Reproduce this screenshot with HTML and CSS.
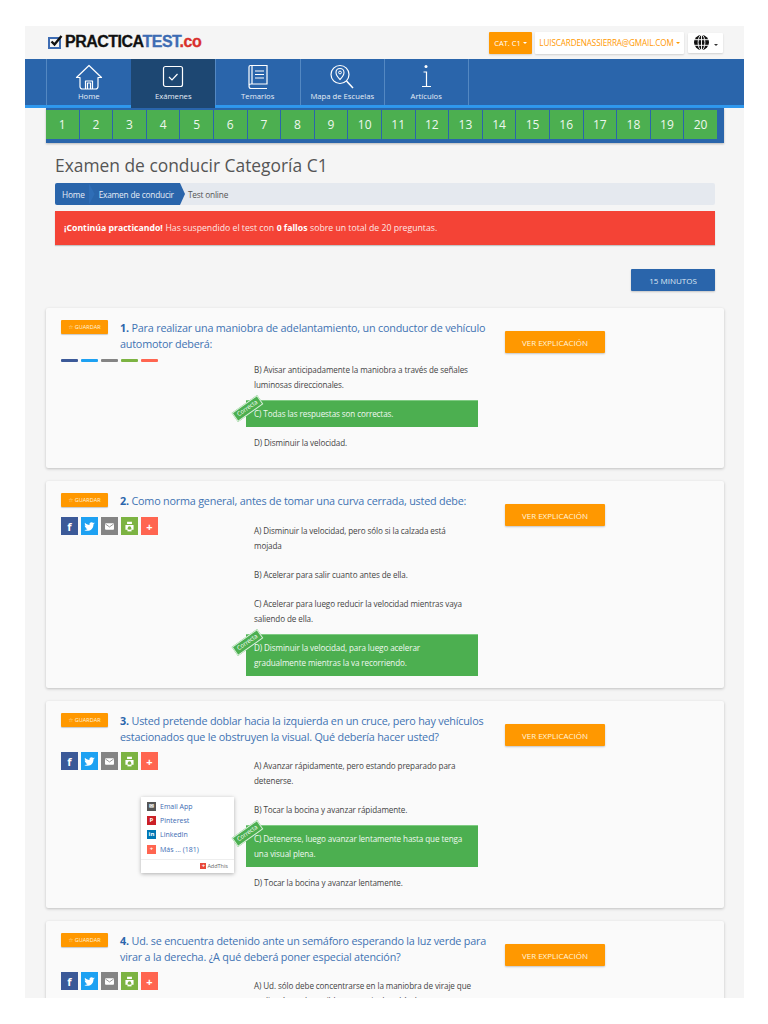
FILE: index.html
```html
<!DOCTYPE html>
<html lang="es">
<head>
<meta charset="utf-8">
<title>Examen de conducir Categoría C1</title>
<link rel="stylesheet" href="styles.css">
</head>
<body>
<div class="sheet">
  <header class="top">
    <a class="logo">
      <svg class="logo-icon" viewBox="0 0 15 14"><rect x="1" y="3" width="11" height="10" fill="none" stroke="#3d6cb3" stroke-width="2"/><path d="M3.5 6.5l3 3L13.5 1" fill="none" stroke="#111" stroke-width="2.4"/></svg>
      <span class="logo-text">PRACTICA<span class="logo-blue">TEST</span><span class="logo-red">.co</span></span>
    </a>
    <div class="top-actions">
      <button class="tbtn tbtn-orange">CAT. C1 <i class="caret"></i></button>
      <button class="tbtn tbtn-white">LUISCARDENASSIERRA@GMAIL.COM <i class="caret"></i></button>
      <button class="tbtn tbtn-globe">
        <svg class="globe" viewBox="0 0 16 16"><circle cx="8" cy="8" r="8" fill="#111"/><g fill="none" stroke="#fff" stroke-width="1"><ellipse cx="8" cy="8" rx="3.6" ry="8"/><path d="M8 0v16M0 5h16M0 11h16"/></g></svg>
        <i class="caret caret-dark"></i>
      </button>
    </div>
  </header>

  <nav class="nav">
    <a class="nav-item">
      <svg class="nav-icon" viewBox="0 0 28 26"><path d="M14 1.500L1.500 13.500h3.500v9c0 1.500 1 2.500 2.500 2.500h13c1.500 0 2.500-1 2.500-2.500v-9h3.500zM10.500 25v-8h7v8M12.500 25v-6h3v6" fill="none" stroke="#fff" stroke-width="1.200" stroke-linejoin="round"/></svg>
      <span>Home</span>
    </a>
    <a class="nav-item nav-active">
      <svg class="nav-icon" viewBox="0 0 28 26"><rect x="4.500" y="2.500" width="19" height="20" rx="2" fill="none" stroke="#fff" stroke-width="1.200"/><path d="M10 13l3 3 5.500-6" fill="none" stroke="#fff" stroke-width="1.200"/></svg>
      <span>Exámenes</span>
    </a>
    <a class="nav-item">
      <svg class="nav-icon" viewBox="0 0 28 26"><path d="M5 21V3c0-1 .7-1.500 1.500-1.500H23V20H7c-1.200 0-2 .6-2 2s.8 2.500 2 2.500h16M8 2v18M11 7h9M11 10.500h9M11 14h9" fill="none" stroke="#fff" stroke-width="1.200"/></svg>
      <span>Temarios</span>
    </a>
    <a class="nav-item">
      <svg class="nav-icon" viewBox="0 0 28 26"><circle cx="12" cy="10.500" r="9" fill="none" stroke="#fff" stroke-width="1.200"/><path d="M12 4.500c-2.500 0-4 1.800-4 4 0 3 4 7 4 7s4-4 4-7c0-2.200-1.500-4-4-4z" fill="none" stroke="#fff" stroke-width="1.100"/><circle cx="12" cy="8.500" r="1.400" fill="none" stroke="#fff"/><path d="M18.500 17l6.500 7" stroke="#fff" stroke-width="1.500"/></svg>
      <span>Mapa de Escuelas</span>
    </a>
    <a class="nav-item">
      <svg class="nav-icon" viewBox="0 0 28 26"><circle cx="14" cy="2.500" r="1.500" fill="#fff"/><path d="M11.500 8H14.500V22M10 22.500h9" fill="none" stroke="#fff" stroke-width="1.200"/></svg>
      <span>Artículos</span>
    </a>
  </nav>

  <div class="strip">
    <a class="num">1</a><a class="num">2</a><a class="num">3</a><a class="num">4</a><a class="num">5</a>
    <a class="num">6</a><a class="num">7</a><a class="num">8</a><a class="num">9</a><a class="num">10</a>
    <a class="num">11</a><a class="num">12</a><a class="num">13</a><a class="num">14</a><a class="num">15</a>
    <a class="num">16</a><a class="num">17</a><a class="num">18</a><a class="num">19</a><a class="num">20</a>
  </div>

  <section class="intro">
    <h1 class="page-title">Examen de conducir Categoría C1</h1>
    <div class="crumbs">
      <div class="crumb-blue"><a>Home</a><i class="crumb-sep"></i><a>Examen de conducir</a></div>
      <span class="crumb-last">Test online</span>
    </div>
    <div class="alert"><b>¡Continúa practicando!</b> Has suspendido el test con <b>0 fallos</b> sobre un total de 20 preguntas.</div>
    <div class="timer-row"><button class="timer">15 MINUTOS</button></div>
  </section>

  <main class="cards">
    <article class="card">
      <div class="card-main">
        <div class="q-head">
          <button class="save"><span class="star">☆</span> GUARDAR</button>
          <h2 class="q-title"><b>1.</b> Para realizar una maniobra de adelantamiento, un conductor de vehículo automotor deberá:</h2>
        </div>
        <div class="q-body">
          <div class="share-col">
            <div class="bars"><i class="bar c-fb"></i><i class="bar c-tw"></i><i class="bar c-mail"></i><i class="bar c-print"></i><i class="bar c-plus"></i></div>
          </div>
          <div class="answers answers-tight">
            <div class="answer">B) Avisar anticipadamente la maniobra a través de señales luminosas direccionales.</div>
            <div class="answer correct"><span class="ribbon">Correcta</span>C) Todas las respuestas son correctas.</div>
            <div class="answer">D) Disminuir la velocidad.</div>
          </div>
        </div>
      </div>
      <div class="card-aside"><button class="explain">VER EXPLICACIÓN</button></div>
    </article>

    <article class="card">
      <div class="card-main">
        <div class="q-head">
          <button class="save"><span class="star">☆</span> GUARDAR</button>
          <h2 class="q-title"><b>2.</b> Como norma general, antes de tomar una curva cerrada, usted debe:</h2>
        </div>
        <div class="q-body">
          <div class="share-col">
            <div class="shares">
              <a class="share c-fb">f</a>
              <a class="share c-tw"><svg viewBox="0 0 16 16"><path d="M14.500 4.200c-.5.2-1 .4-1.500.4.500-.3 1-.8 1.200-1.400-.5.3-1.100.5-1.700.6a2.600 2.600 0 0 0-4.500 2.400C5.700 6.100 3.800 5.100 2.500 3.500c-.7 1.200-.3 2.700.8 3.500-.4 0-.8-.1-1.200-.3 0 1.300.9 2.400 2.100 2.600-.4.100-.8.100-1.200 0 .3 1 1.300 1.800 2.500 1.800-1.100.9-2.500 1.300-3.900 1.100 3.900 2.500 11.300 1 11.300-7 .6-.4 1.100-.9 1.600-1.500z" fill="#fff"/></svg></a>
              <a class="share c-mail"><svg viewBox="0 0 16 16"><rect x="2.500" y="4" width="11" height="8" rx="1" fill="#fff"/><path d="M3 5l5 3.500L13 5" fill="none" stroke="#848484"/></svg></a>
              <a class="share c-print"><svg viewBox="0 0 16 16"><path d="M5 2h6v3H5zM3 6h10v6H3z" fill="#fff"/><circle cx="8" cy="10" r="2.200" fill="#7cb342"/><rect x="5.500" y="12" width="5" height="2" fill="#fff"/></svg></a>
              <a class="share c-plus">+</a>
            </div>
          </div>
          <div class="answers">
            <div class="answer">A) Disminuir la velocidad, pero sólo si la calzada está mojada</div>
            <div class="answer">B) Acelerar para salir cuanto antes de ella.</div>
            <div class="answer">C) Acelerar para luego reducir la velocidad mientras vaya saliendo de ella.</div>
            <div class="answer correct"><span class="ribbon">Correcta</span>D) Disminuir la velocidad, para luego acelerar gradualmente mientras la va recorriendo.</div>
          </div>
        </div>
      </div>
      <div class="card-aside"><button class="explain">VER EXPLICACIÓN</button></div>
    </article>

    <article class="card">
      <div class="card-main">
        <div class="q-head">
          <button class="save"><span class="star">☆</span> GUARDAR</button>
          <h2 class="q-title"><b>3.</b> Usted pretende doblar hacia la izquierda en un cruce, pero hay vehículos estacionados que le obstruyen la visual. Qué debería hacer usted?</h2>
        </div>
        <div class="q-body">
          <div class="share-col">
            <div class="shares">
              <a class="share c-fb">f</a>
              <a class="share c-tw"><svg viewBox="0 0 16 16"><path d="M14.500 4.200c-.5.2-1 .4-1.500.4.500-.3 1-.8 1.200-1.400-.5.3-1.100.5-1.700.6a2.600 2.600 0 0 0-4.500 2.400C5.700 6.100 3.800 5.100 2.500 3.500c-.7 1.200-.3 2.700.8 3.500-.4 0-.8-.1-1.200-.3 0 1.300.9 2.400 2.100 2.600-.4.100-.8.100-1.200 0 .3 1 1.300 1.800 2.500 1.800-1.100.9-2.500 1.300-3.900 1.100 3.900 2.500 11.300 1 11.300-7 .6-.4 1.100-.9 1.600-1.500z" fill="#fff"/></svg></a>
              <a class="share c-mail"><svg viewBox="0 0 16 16"><rect x="2.500" y="4" width="11" height="8" rx="1" fill="#fff"/><path d="M3 5l5 3.500L13 5" fill="none" stroke="#848484"/></svg></a>
              <a class="share c-print"><svg viewBox="0 0 16 16"><path d="M5 2h6v3H5zM3 6h10v6H3z" fill="#fff"/><circle cx="8" cy="10" r="2.200" fill="#7cb342"/><rect x="5.500" y="12" width="5" height="2" fill="#fff"/></svg></a>
              <a class="share c-plus">+</a>
            </div>
            <div class="menu">
              <a class="menu-row"><i class="mi c-app">✉</i>Email App</a>
              <a class="menu-row"><i class="mi c-pin">P</i>Pinterest</a>
              <a class="menu-row"><i class="mi c-in">in</i>LinkedIn</a>
              <a class="menu-row"><i class="mi c-plus">+</i>Más ... (181)</a>
              <div class="menu-foot"><i class="mi-small">+</i>AddThis</div>
            </div>
          </div>
          <div class="answers">
            <div class="answer">A) Avanzar rápidamente, pero estando preparado para detenerse.</div>
            <div class="answer">B) Tocar la bocina y avanzar rápidamente.</div>
            <div class="answer correct"><span class="ribbon">Correcta</span>C) Detenerse, luego avanzar lentamente hasta que tenga una visual plena.</div>
            <div class="answer">D) Tocar la bocina y avanzar lentamente.</div>
          </div>
        </div>
      </div>
      <div class="card-aside"><button class="explain">VER EXPLICACIÓN</button></div>
    </article>

    <article class="card">
      <div class="card-main">
        <div class="q-head">
          <button class="save"><span class="star">☆</span> GUARDAR</button>
          <h2 class="q-title"><b>4.</b> Ud. se encuentra detenido ante un semáforo esperando la luz verde para virar a la derecha. ¿A qué deberá poner especial atención?</h2>
        </div>
        <div class="q-body">
          <div class="share-col">
            <div class="shares">
              <a class="share c-fb">f</a>
              <a class="share c-tw"><svg viewBox="0 0 16 16"><path d="M14.500 4.200c-.5.2-1 .4-1.500.4.500-.3 1-.8 1.200-1.400-.5.3-1.100.5-1.700.6a2.600 2.600 0 0 0-4.500 2.400C5.700 6.100 3.800 5.100 2.500 3.500c-.7 1.200-.3 2.700.8 3.500-.4 0-.8-.1-1.200-.3 0 1.300.9 2.400 2.100 2.600-.4.100-.8.100-1.200 0 .3 1 1.300 1.800 2.500 1.800-1.100.9-2.500 1.300-3.900 1.100 3.900 2.500 11.300 1 11.300-7 .6-.4 1.100-.9 1.600-1.500z" fill="#fff"/></svg></a>
              <a class="share c-mail"><svg viewBox="0 0 16 16"><rect x="2.500" y="4" width="11" height="8" rx="1" fill="#fff"/><path d="M3 5l5 3.500L13 5" fill="none" stroke="#848484"/></svg></a>
              <a class="share c-print"><svg viewBox="0 0 16 16"><path d="M5 2h6v3H5zM3 6h10v6H3z" fill="#fff"/><circle cx="8" cy="10" r="2.200" fill="#7cb342"/><rect x="5.500" y="12" width="5" height="2" fill="#fff"/></svg></a>
              <a class="share c-plus">+</a>
            </div>
          </div>
          <div class="answers">
            <div class="answer">A) Ud. sólo debe concentrarse en la maniobra de viraje que realizará y en la posible presencia de vehículos.</div>
          </div>
        </div>
      </div>
      <div class="card-aside"><button class="explain">VER EXPLICACIÓN</button></div>
    </article>
  </main>
</div>
</body>
</html>
```

FILE: styles.css
```css
* { box-sizing: border-box; }
html, body { margin: 0; padding: 0; background: #fff; }
body { font-family: "Open Sans", "Liberation Sans", sans-serif; color: #444; }
a { color: inherit; text-decoration: none; }
i { font-style: normal; }
button { font-family: inherit; border: 0; cursor: pointer; padding: 0; }

.sheet { width: 719px; height: 972px; margin: 26px 24px 26px 25px; background: #f5f5f5; overflow: hidden; }

/* top bar */
.top { height: 33px; display: flex; align-items: center; justify-content: space-between; padding: 0 21px 0 23px; }
.logo { display: flex; align-items: center; gap: 2px; margin-top: -1px; }
.logo-icon { width: 15px; height: 14px; }
.logo-text { font: 700 16px/18px "Liberation Sans", Arial, sans-serif; color: #111; letter-spacing: -.5px; -webkit-text-stroke: .3px currentColor; }
.logo-blue { color: #3d6cb3; }
.logo-red { color: #d9302c; }
.top-actions { display: flex; align-items: center; gap: 3px; }
.tbtn { height: 22px; font-size: 7.500px; border-radius: 1px; display: flex; align-items: center; gap: 2px; box-shadow: 0 1px 2px rgba(0,0,0,.15); white-space: nowrap; }
.tbtn-orange { width: 43px; background: #ff9800; color: #fff; justify-content: center; }
.tbtn-white { width: 149px; background: #fff; color: #ff9800; justify-content: center; font-size: 8.100px; letter-spacing: -.1px; }
.tbtn-globe { width: 35px; height: 20px; margin-left: 1px; background: #fff; justify-content: center; gap: 5px; }
.caret { display: inline-block; width: 0; height: 0; border: 2px solid transparent; border-top-color: currentColor; border-bottom: 0; }
.caret-dark { color: #333; margin-top: 5px; }
.globe { width: 15px; height: 15px; }

/* main nav */
.nav { height: 49px; display: flex; padding-left: 21px; background: #2a65ab; border-bottom: 3px solid #2f98ee; }
.nav-item { width: 84.500px; height: 46px; display: flex; flex-direction: column; align-items: center; color: #e6edf6; font-size: 7.700px; line-height: 10px; padding-top: 5px; border-left: 1px solid #5488c2; }
.nav-item:last-child { border-right: 1px solid #5488c2; }
.nav-icon { width: 28px; height: 26px; }
.nav-item span { margin-top: 1px; }
.nav-active { background: #1d4772; height: 49px; border-left-color: #1d4772; }

/* question numbers */
.strip { height: 35px; margin: 0 20px 0 21px; padding: 2px 7px 4px 0; display: flex; gap: 1px; background: #2a65ab; box-shadow: 0 1px 2px rgba(0,0,0,.25); }
.num { flex: 1; display: flex; align-items: center; justify-content: center; background: #4caf50; color: #eef7ee; font-size: 12px; }

/* page intro */
.intro { padding: 10px 29px 0 30px; }
.page-title { margin: 0; font-size: 17.400px; line-height: 24px; font-weight: 400; color: #555; }
.crumbs { height: 22px; margin-top: 6px; display: flex; align-items: center; background: #e5e9ef; border-radius: 2px; font-size: 8.300px; color: #555; letter-spacing: -.2px; white-space: nowrap; }
.crumb-blue { height: 22px; width: 130px; flex: none; padding-left: 7px; display: flex; align-items: center; background: #2a65ab; color: #e6edf6; border-radius: 2px 0 0 2px; clip-path: polygon(0 0, 125px 0, 130px 50%, 125px 100%, 0 100%); }
.crumb-sep { width: 6px; height: 22px; flex: none; margin: 0 4px; background: #2f6db6; clip-path: polygon(0 0, 100% 50%, 0 100%); }
.crumb-last { margin-left: 3px; }
.alert { height: 34px; margin-top: 6px; padding-left: 9px; display: flex; align-items: center; gap: .3em; background: #f44336; color: #fde7e5; font-size: 8.700px; box-shadow: 0 1px 1px rgba(0,0,0,.2); }
.alert b { color: #fff; }
.timer-row { display: flex; justify-content: flex-end; margin-top: 24px; }
.timer { width: 84px; height: 22px; background: #2a65ab; color: #dfe8f3; font-size: 8px; border-radius: 1px; box-shadow: 0 1px 2px rgba(0,0,0,.2); }

/* cards */
.cards { padding: 17px 20px 0 21px; display: flex; flex-direction: column; gap: 13px; }
.card { display: flex; padding: 12px 15px 10px; background: #fafafa; border-radius: 2px; box-shadow: 0 1px 3px rgba(0,0,0,.22); }
.card-main { width: 444px; flex: none; }
.card-aside { padding-top: 11px; display: flex; align-items: flex-start; }
.q-head { display: flex; gap: 12px; margin-bottom: 8px; min-height: 16px; }
.save { flex: none; width: 47px; height: 14px; background: #ff9800; color: #fff3df; font-size: 5.500px; border-radius: 1px; box-shadow: 0 1px 1px rgba(0,0,0,.2); }
.star { font-family: "DejaVu Sans", sans-serif; }
.q-title { margin: 0; width: 372px; font-size: 10.800px; letter-spacing: -.2px; line-height: 15.500px; font-weight: 400; color: #3f73b3; }
.q-title b { font-weight: 700; color: #2a65ab; }
.explain { width: 100px; height: 22px; background: #ff9800; color: #fff3df; font-size: 8px; border-radius: 1px; box-shadow: 0 1px 2px rgba(0,0,0,.22); }

.q-body { display: flex; }
.share-col { width: 185px; flex: none; position: relative; }
.bars { display: flex; gap: 3px; }
.bar { width: 17px; height: 3px; border-radius: 1px; }
.shares { display: flex; gap: 3px; }
.share { width: 17px; height: 18px; display: flex; align-items: center; justify-content: center; color: #fff; font-size: 11px; font-weight: 700; }
.share svg { width: 13px; height: 13px; }
.c-fb { background: #3b5998; }
.c-tw { background: #1da1f2; }
.c-mail { background: #848484; }
.c-print { background: #7cb342; }
.c-plus { background: #ff6550; }

.answers { width: 232px; flex: none; }
.answers-tight { margin-top: -3px; }
.answer { position: relative; padding: 6px 6px 6px 8px; margin-bottom: 2px; font-size: 8.100px; letter-spacing: -.1px; line-height: 15px; color: #444; }
.correct { background: #4caf50; color: #f0f8f0; border-top: 1px solid #7fcb83; padding-top: 5px; }
.ribbon { position: absolute; left: -14px; top: 2px; width: 31px; height: 11px; background: #4caf50; border: 1px solid #d8efd9; color: #fff; font-size: 6px; line-height: 9px; text-align: center; transform: rotate(-35deg); }

/* share menu */
.menu { position: absolute; left: 80px; top: 45px; width: 93px; height: 76px; padding-top: 2px; background: #fff; box-shadow: 0 1px 4px rgba(0,0,0,.3); color: #3d6cb3; font-size: 7px; }
.menu-row { height: 14.400px; padding-left: 6px; display: flex; align-items: center; gap: 4px; }
.mi { width: 9px; height: 9px; display: flex; align-items: center; justify-content: center; color: #fff; font-size: 6px; line-height: 9px; font-weight: 700; }
.c-app { background: #555; }
.c-pin { background: #cb2027; }
.c-in { background: #0077b5; }
.menu-foot { height: 14px; margin-top: 2px; padding-right: 6px; display: flex; align-items: center; justify-content: flex-end; gap: 1px; border-top: 1px solid #eee; color: #666; font-size: 5.500px; }
.mi-small { width: 6px; height: 6px; display: flex; align-items: center; justify-content: center; background: #e8483a; color: #fff; font-size: 6px; line-height: 6px; font-weight: 700; }
```
